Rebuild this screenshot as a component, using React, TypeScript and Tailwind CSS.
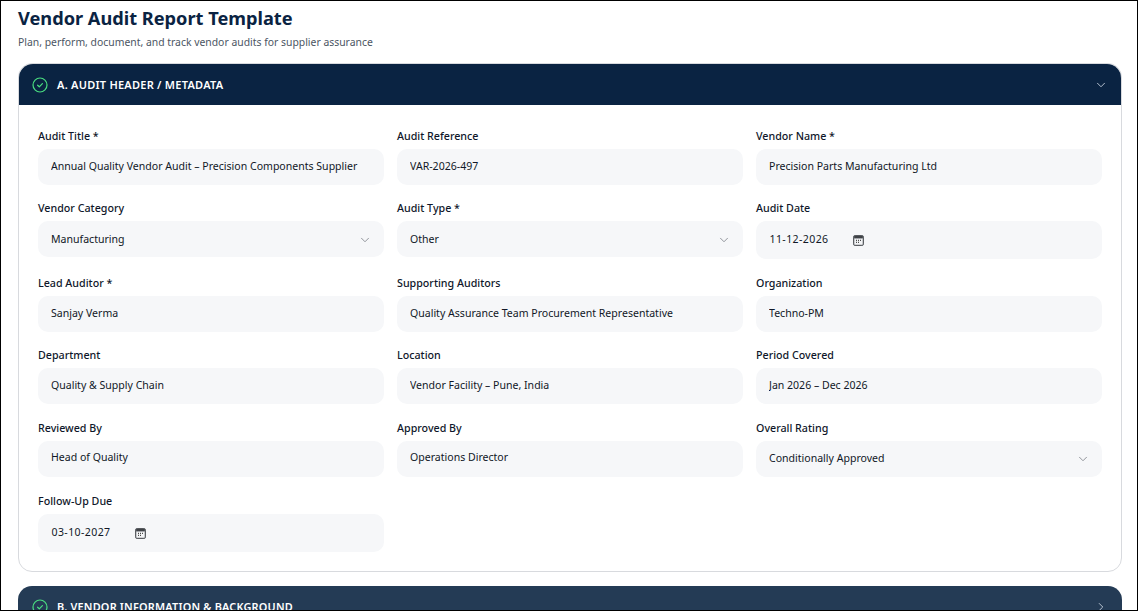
import { ChevronDown, ChevronRight } from 'lucide-react';

const FONT = "font-['Noto_Sans','Open_Sans',sans-serif]";

type Field = {
  label: string;
  value: string;
  kind?: 'select' | 'date';
};

const fields: Field[] = [
  { label: 'Audit Title *', value: 'Annual Quality Vendor Audit – Precision Components Supplier' },
  { label: 'Audit Reference', value: 'VAR-2026-497' },
  { label: 'Vendor Name *', value: 'Precision Parts Manufacturing Ltd' },
  { label: 'Vendor Category', value: 'Manufacturing', kind: 'select' },
  { label: 'Audit Type *', value: 'Other', kind: 'select' },
  { label: 'Audit Date', value: '11-12-2026', kind: 'date' },
  { label: 'Lead Auditor *', value: 'Sanjay Verma' },
  { label: 'Supporting Auditors', value: 'Quality Assurance Team Procurement Representative' },
  { label: 'Organization', value: 'Techno-PM' },
  { label: 'Department', value: 'Quality & Supply Chain' },
  { label: 'Location', value: 'Vendor Facility – Pune, India' },
  { label: 'Period Covered', value: 'Jan 2026 – Dec 2026' },
  { label: 'Reviewed By', value: 'Head of Quality' },
  { label: 'Approved By', value: 'Operations Director' },
  { label: 'Overall Rating', value: 'Conditionally Approved', kind: 'select' },
  { label: 'Follow-Up Due', value: '03-10-2027', kind: 'date' },
];

function CheckCircle() {
  return (
    <svg width="16" height="16" viewBox="0 0 16 16" fill="none" stroke="#4ade80" strokeWidth="1.2" strokeLinecap="round" strokeLinejoin="round">
      <circle cx="8" cy="8" r="7" />
      <path d="M5.6 8.2l1.7 1.6 3.1-3.2" />
    </svg>
  );
}

function CalendarGlyph() {
  return (
    <svg width="11" height="11" viewBox="0 0 11 11" className="shrink-0">
      <rect x="0.5" y="0.5" width="10" height="10" rx="1.6" fill="#9a9ea3" stroke="#3f4247" strokeWidth="0.8" />
      <rect x="1.2" y="0.9" width="8.6" height="2.2" fill="#3f4247" />
      <rect x="1.5" y="3.8" width="8" height="5.8" fill="#f3f4f6" />
      <path d="M3 5.3h1M5 5.3h1M7 5.3h1M3 7.3h1M5 7.3h1" stroke="#222" strokeWidth="1" />
    </svg>
  );
}

function FormField({ field }: { field: Field }) {
  const isDate = field.kind === 'date';
  const isSelect = field.kind === 'select';
  return (
    <div>
      <div className="mb-[4.9px] text-[10.7px] leading-[16px] font-medium text-[#0f172a]">{field.label}</div>
      <div
        className={`flex items-center rounded-[10px] bg-[#f6f7f9] pl-[13px] text-[10.55px] text-[#111827] ${
          isDate ? 'h-[38.2px] pr-[13px]' : isSelect ? 'mb-[1px] h-[36px] pr-[12px] pt-[1px]' : 'h-[36px] pb-[0.5px] pr-[13px]'
        }`}
      >
        {isDate ? (
          <>
            <span className="w-[84px] pl-[0.5px] tracking-[0.4px]">{field.value}</span>
            <CalendarGlyph />
          </>
        ) : (
          <span className="flex-1 truncate">{field.value}</span>
        )}
        {isSelect && <ChevronDown size={14} strokeWidth={1.5} className="text-[#83878e]" />}
      </div>
    </div>
  );
}

export default function App() {
  return (
    <div className={`${FONT} h-[611px] overflow-hidden border border-black bg-white pl-[17px] pr-[15px]`}>
      <h1 className="mt-[3px] text-[18.2px] leading-[28px] font-bold text-[#0a2342]">Vendor Audit Report Template</h1>
      <p className="mt-[2px] text-[10.4px] leading-[16px] text-[#4b5563]">
        Plan, perform, document, and track vendor audits for supplier assurance
      </p>

      <section className="mt-[13px] rounded-[14px] border border-[#d8dade] bg-white">
        <div className="flex h-[41px] items-center gap-[9px] rounded-t-[14px] bg-[#0a2342] pl-[13px] pr-[13px]">
          <CheckCircle />
          <span className="flex-1 pt-[1px] text-[11px] font-semibold tracking-[0.25px] text-white">A. AUDIT HEADER / METADATA</span>
          <ChevronDown size={14} strokeWidth={1.5} className="text-[#cbd5e1]" />
        </div>
        <div className="grid grid-cols-3 gap-x-[13px] gap-y-[15.5px] px-[19px] pb-[19px] pt-[23px]">
          {fields.map((field) => (
            <FormField key={field.label} field={field} />
          ))}
        </div>
      </section>

      <section className="mt-[14px] rounded-[14px] bg-[#243b55]">
        <div className="flex h-[41px] items-center gap-[9px] pl-[14px] pr-[14px]">
          <CheckCircle />
          <span className="flex-1 text-[10.9px] font-semibold tracking-[0.2px] text-white">B. VENDOR INFORMATION &amp; BACKGROUND</span>
          <ChevronRight size={14} strokeWidth={1.5} className="text-[#cbd5e1]" />
        </div>
      </section>
    </div>
  );
}
